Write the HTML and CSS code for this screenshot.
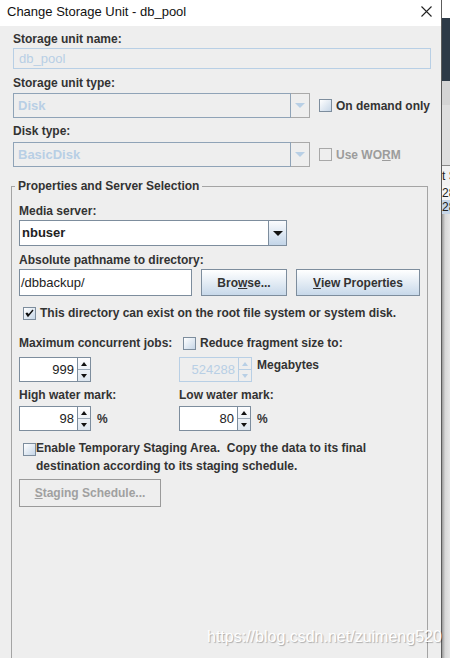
FILE: index.html
```html
<!DOCTYPE html>
<html lang="en">
<head>
    <meta charset="UTF-8">
    <title>Change Storage Unit - db_pool</title>
    <link rel="stylesheet" href="styles.css">
</head>
<body>
<div class="screen">
    <div class="dialog">
        <div class="titlebar">
            <span class="title">Change Storage Unit - db_pool</span>
            <svg class="close" width="11" height="11" viewBox="0 0 11 11">
                <path d="M0.5 0.5 L10.5 10.5 M10.5 0.5 L0.5 10.5" stroke="#222" stroke-width="1.1" fill="none"/>
            </svg>
        </div>
        <div class="content">
            <div class="label">Storage unit name:</div>
            <div class="field disabled">db_pool</div>

            <div class="label gap7">Storage unit type:</div>
            <div class="combo-row top3">
                <div class="combo disabled wide">
                    <span class="combo-text">Disk</span>
                    <span class="combo-btn"><span class="tri"></span></span>
                </div>
                <span class="cb"></span>
                <span class="cb-label">On demand only</span>
            </div>

            <div class="label gap6">Disk type:</div>
            <div class="combo-row top4">
                <div class="combo disabled wide">
                    <span class="combo-text">BasicDisk</span>
                    <span class="combo-btn"><span class="tri"></span></span>
                </div>
                <span class="cb off"></span>
                <span class="cb-label grey">Use WO<u>R</u>M</span>
            </div>

            <fieldset class="group">
                <legend>Properties and Server Selection</legend>

                <div class="label">Media server:</div>
                <div class="combo media">
                    <span class="combo-text">nbuser</span>
                    <span class="combo-btn"><span class="tri"></span></span>
                </div>

                <div class="label gap7">Absolute pathname to directory:</div>
                <div class="path-row">
                    <div class="text-input">/dbbackup/</div>
                    <button class="btn browse">Bro<u>w</u>se...</button>
                    <button class="btn view"><u>V</u>iew Properties</button>
                </div>

                <div class="check-row">
                    <span class="cb checked">
                        <svg width="11" height="11" viewBox="0 0 11 11"><path d="M2 5 L4 8 L9 2 M3 5 L4.5 7" stroke="#111" stroke-width="1.4" fill="none"/></svg>
                    </span>
                    <span class="cb-label">This directory can exist on the root file system or system disk.</span>
                </div>

                <div class="two-col jobs">
                    <div class="label">Maximum concurrent jobs:</div>
                    <div class="check-row inline">
                        <span class="cb"></span>
                        <span class="cb-label">Reduce fragment size to:</span>
                    </div>
                </div>

                <div class="two-col spin-row">
                    <div class="spinner">
                        <span class="spin-value">999</span>
                        <span class="spin-btns"><span class="up"></span><span class="down"></span></span>
                    </div>
                    <div class="with-unit">
                        <div class="spinner disabled">
                            <span class="spin-value">524288</span>
                            <span class="spin-btns"><span class="up"></span><span class="down"></span></span>
                        </div>
                        <span class="label unit">Megabytes</span>
                    </div>
                </div>

                <div class="two-col marks">
                    <div class="label">High water mark:</div>
                    <div class="label">Low water mark:</div>
                </div>

                <div class="two-col mark-row">
                    <div class="with-unit center">
                        <div class="spinner">
                            <span class="spin-value">98</span>
                            <span class="spin-btns"><span class="up"></span><span class="down"></span></span>
                        </div>
                        <span class="label">%</span>
                    </div>
                    <div class="with-unit center">
                        <div class="spinner">
                            <span class="spin-value">80</span>
                            <span class="spin-btns"><span class="up"></span><span class="down"></span></span>
                        </div>
                        <span class="label">%</span>
                    </div>
                </div>

                <div class="staging">
                    <span class="cb"></span>
                    <span class="staging-text">Enable Temporary Staging Area.&nbsp; Copy the data to its final<br>destination according to its staging schedule.</span>
                </div>

                <button class="btn flat"><u>S</u>taging Schedule...</button>
            </fieldset>
        </div>
    </div>

    <div class="backdrop">
        <div class="bd-white"></div>
        <div class="bd-dark"></div>
        <div class="bd-gray"></div>
        <div class="bd-header">t S</div>
        <div class="bd-cell">28</div>
        <div class="bd-cell sel">28</div>
        <div class="bd-rest"></div>
    </div>

    <div class="watermark">https://blog.csdn.net/zuimeng520</div>
</div>
</body>
</html>
```

FILE: styles.css
```css
* {
    box-sizing: border-box;
}
body {
    margin: 0;
    font-family: "Liberation Sans", Arial, sans-serif;
    font-size: 12px;
    color: #333;
    background: #e2e2e2;
}
.screen {
    position: relative;
    display: flex;
    width: 450px;
    height: 658px;
    overflow: hidden;
}
.dialog {
    flex: none;
    width: 442px;
    background: #eeeeee;
    border-right: 1px solid #5c5c5c;
}
.titlebar {
    height: 26px;
    background: #fff;
    display: flex;
    align-items: center;
    justify-content: space-between;
    padding: 0 9px 3px 7px;
}
.title {
    font-size: 13px;
    color: #111;
}
.content {
    padding: 6px 10px 0 13px;
}
.label {
    font-weight: bold;
    line-height: 14px;
    height: 14px;
    white-space: nowrap;
}
.gap7 { margin-top: 7px; }
.gap6 { margin-top: 6px; }
.top3 { margin-top: 3px; }
.top4 { margin-top: 4px; }

.field {
    margin-top: 2px;
    height: 21px;
    border: 1px solid #b8cfe5;
    padding: 0 5px;
    line-height: 19px;
    font-size: 13px;
}
.disabled {
    color: #b8cfe5;
}

/* combo boxes */
.combo-row {
    display: flex;
    align-items: center;
}
.combo {
    display: flex;
    height: 25px;
    font-weight: bold;
    font-size: 13px;
}
.combo.wide {
    width: 297px;
}
.combo-text {
    flex: 1;
    padding-left: 4px;
    line-height: 23px;
    border: 1px solid #8fa3b7;
}
.combo-btn {
    width: 19px;
    border: 1px solid #a9a9a9;
    border-left: none;
    display: flex;
    align-items: center;
    justify-content: center;
}
.tri {
    width: 0;
    height: 0;
    border-left: 5px solid transparent;
    border-right: 5px solid transparent;
    border-top: 5px solid #b8cfe5;
}
.combo.media {
    width: 268px;
    height: 26px;
    margin-top: 2px;
    color: #222;
}
.combo.media .combo-text {
    background: #fff;
    border-color: #7d8d9d;
    padding-left: 2px;
    line-height: 24px;
}
.combo.media .combo-btn {
    width: 18px;
    border-color: #7d8d9d;
    background: linear-gradient(#fbfcfe, #c3d5e8);
}
.combo.media .tri {
    border-top-color: #111;
}

/* checkboxes */
.cb {
    flex: none;
    width: 13px;
    height: 13px;
    border: 1px solid #7d8d9d;
    background: linear-gradient(135deg, #ffffff, #c6d6e7);
    display: inline-flex;
    align-items: center;
    justify-content: center;
}
.cb.off {
    border-color: #a8a8a8;
    background: #eeeeee;
}
.combo-row .cb {
    margin-left: 9px;
}
.cb-label {
    margin-left: 4px;
    font-weight: bold;
    line-height: 14px;
    white-space: nowrap;
}
.grey {
    color: #9c9c9c;
}

/* group box */
.group {
    margin: 12px 0 0 -2px;
    width: 417px;
    height: 620px;
    border: 1px solid #a4a4a4;
    padding: 11px 0 0 7px;
}
.group legend {
    font-weight: bold;
    line-height: 14px;
    padding: 0 3px;
    margin-left: -4px;
    color: #333;
}
.path-row {
    display: flex;
    margin-top: 2px;
    height: 27px;
}
.text-input {
    width: 173px;
    background: #fff;
    border: 1px solid #7d8d9d;
    padding-left: 1px;
    line-height: 25px;
    font-size: 13px;
    color: #222;
}
.btn {
    font-family: "Liberation Sans", Arial, sans-serif;
    font-size: 12px;
    font-weight: bold;
    color: #333;
    border: 1px solid #7d8d9d;
    background: linear-gradient(#ffffff, #c8d9ea);
    padding: 0;
    margin-left: 9px;
    height: 27px;
}
.btn.browse { width: 86px; }
.btn.view { width: 124px; }
.btn.flat {
    margin: 4px 0 0 0;
    width: 142px;
    height: 28px;
    background: #eeeeee;
    border-color: #9a9a9a;
    color: #a0a0a0;
}

.check-row {
    display: flex;
    align-items: center;
    margin-top: 10px;
    padding-left: 4px;
    height: 14px;
}
.check-row.inline {
    margin-top: 0;
    height: 14px;
}
.two-col {
    display: grid;
    grid-template-columns: 160px 1fr;
}
.jobs { margin-top: 16px; }
.spin-row { margin-top: 7px; }
.marks { margin-top: 6px; }
.mark-row { margin-top: 4px; }

/* spinners */
.spinner {
    display: flex;
    width: 72px;
    height: 25px;
    border: 1px solid #7d8d9d;
}
.spin-value {
    flex: 1;
    background: #fff;
    text-align: right;
    padding-right: 3px;
    line-height: 23px;
    font-size: 13px;
    color: #222;
}
.spin-btns {
    width: 13px;
    border-left: 1px solid #7d8d9d;
    display: flex;
    flex-direction: column;
    background: linear-gradient(#fdfdfe, #dde6ef);
}
.spin-btns span {
    flex: 1;
    display: flex;
    align-items: center;
    justify-content: center;
}
.spin-btns span::after {
    content: "";
    border-left: 3px solid transparent;
    border-right: 3px solid transparent;
}
.spin-btns .up::after {
    border-bottom: 4px solid #111;
}
.spin-btns .down {
    border-top: 1px solid #9aa8b6;
}
.spin-btns .down::after {
    border-top: 4px solid #111;
}
.spinner.disabled {
    width: 73px;
    border-color: #b8cfe5;
}
.spinner.disabled .spin-value {
    background: #eeeeee;
    color: #b8cfe5;
}
.spinner.disabled .spin-btns {
    background: #eeeeee;
    border-left-color: #b8cfe5;
}
.spinner.disabled .up::after { border-bottom-color: #b8cfe5; }
.spinner.disabled .down { border-top-color: #b8cfe5; }
.spinner.disabled .down::after { border-top-color: #b8cfe5; }

.with-unit {
    display: flex;
    align-items: flex-start;
    gap: 5px;
}
.with-unit.center {
    align-items: center;
    gap: 6px;
}
.unit {
    margin-top: 1px;
}

.staging {
    display: flex;
    align-items: flex-start;
    margin-top: 8px;
    padding-left: 4px;
}
.staging .cb {
    margin-top: 4px;
}
.staging-text {
    font-weight: bold;
    line-height: 18px;
}

/* window behind the dialog */
.backdrop {
    flex: 1;
    display: flex;
    flex-direction: column;
    overflow: hidden;
    font-size: 12px;
    color: #222;
}
.bd-white { height: 18px; background: #fff; }
.bd-dark { height: 63px; background: #2d3a47; }
.bd-gray {
    height: 85px;
    background: #dedede;
    border-top: 24px solid #d4d4d4;
    border-bottom: 1px solid #888;
}
.bd-header {
    height: 20px;
    line-height: 20px;
    background: #f2f2f2;
    white-space: nowrap;
}
.bd-cell {
    height: 14px;
    line-height: 14px;
    background: #f6f6f6;
}
.bd-cell.sel {
    background: #c6d6e8;
}
.bd-rest {
    flex: 1;
    background: linear-gradient(90deg, #9a9a9a, #d8d8d8 40%, #e6e6e6);
}

.watermark {
    position: absolute;
    left: 207px;
    top: 628px;
    font-size: 16px;
    color: #ffffff;
    text-shadow: 1px 1px 1px rgba(0, 0, 0, 0.28);
    white-space: nowrap;
}
```
